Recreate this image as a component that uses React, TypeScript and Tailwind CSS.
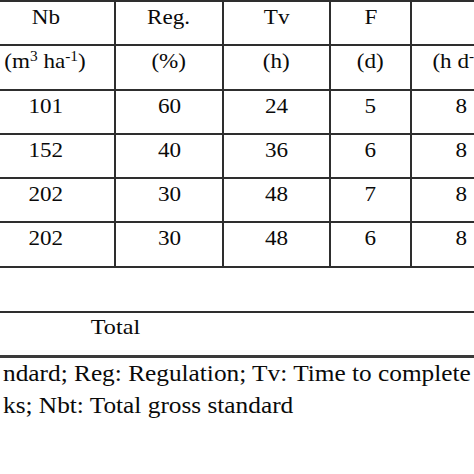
import React from "react";

const cols = "grid grid-cols-[139px_108px_107px_81px_98px]";
const line = "border-[#2e2e2e]";

function Txt({ children }: { children: React.ReactNode }) {
  return <span className="inline-block scale-x-[1.1] whitespace-nowrap">{children}</span>;
}

function Row({ cells, h, top = false }: { cells: React.ReactNode[]; h: string; top?: boolean }) {
  return (
    <div className={`${cols} ${h} border-b-2 ${line} ${top ? "border-t-2" : ""}`}>
      {cells.map((c, i) => (
        <div
          key={i}
          className={`pt-[3px] text-center leading-[25px] ${i < 4 ? `border-r-2 ${line}` : ""}`}
        >
          {c !== "" ? <Txt>{c}</Txt> : null}
        </div>
      ))}
    </div>
  );
}

export default function App() {
  const data = [
    ["101", "60", "24", "5", "8"],
    ["152", "40", "36", "6", "8"],
    ["202", "30", "48", "7", "8"],
    ["202", "30", "48", "6", "8"],
  ];
  const hs = ["h-[44px]", "h-[44px]", "h-[44px]", "h-[45px]"];
  return (
    <div
      className="w-[474px] h-[474px] overflow-hidden bg-white text-[#0a0a0a]"
      style={{ fontFamily: '"Liberation Serif", "Times New Roman", serif' }}
    >
      <div className="ml-[-23px] w-[533px] text-[21px]">
        <Row top h="h-[46px]" cells={["Nb", "Reg.", "Tv", "F", ""]} />
        <Row
          h="h-[45px]"
          cells={[
            <>
              (m<sup className="text-[14px]">3</sup> ha<sup className="text-[14px]">-1</sup>)
            </>,
            "(%)",
            "(h)",
            "(d)",
            <>
              (h d<sup className="text-[14px]">-1</sup>)
            </>,
          ]}
        />
        {data.map((r, i) => (
          <Row key={i} h={hs[i]} cells={r} />
        ))}
      </div>
      <div className={`h-[45px] border-b-2 ${line}`} />
      <div className="h-[45px] border-b-[3px] border-[#3a3a3a] flex">
        <div className="w-[230px] text-center text-[22px] leading-[26px] pt-[1px]">
          <span className="inline-block scale-x-[1.1]">Total</span>
        </div>
      </div>
      <div className="pl-[3px] text-[22.5px] leading-[32px] whitespace-nowrap">
        <div>
          <span className="inline-block origin-left scale-x-[1.125]">
            ndard; Reg: Regulation; Tv: Time to complete
          </span>
        </div>
        <div>
          <span className="inline-block origin-left scale-x-[1.125]">ks; Nbt: Total gross standard</span>
        </div>
      </div>
    </div>
  );
}
